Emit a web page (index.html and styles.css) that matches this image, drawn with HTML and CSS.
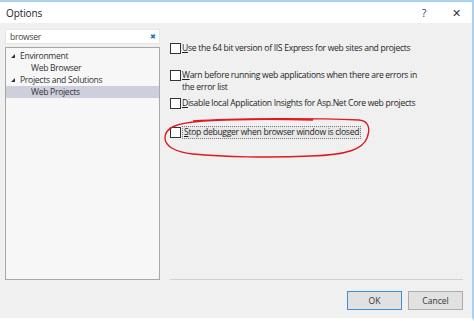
FILE: index.html
```html
<!DOCTYPE html>
<html lang="en">

<head>
    <meta charset="UTF-8">
    <title>Options</title>
    <link rel="stylesheet" href="styles.css">
</head>

<body>
    <div class="window">
        <div class="titlebar">
            <span class="title">Options</span>
            <span class="title-btn help">?</span>
            <span class="title-btn close">&#x2715;</span>
        </div>

        <div class="main">
            <div class="left">
                <div class="search">
                    <span>browser</span>
                    <span class="clear">&#x2716;</span>
                </div>
                <ul class="tree">
                    <li class="node"><span class="arrow"></span>Environment</li>
                    <li class="leaf">Web Browser</li>
                    <li class="node"><span class="arrow"></span>Projects and Solutions</li>
                    <li class="leaf selected">Web Projects</li>
                </ul>
            </div>

            <div class="right">
                <div class="options">
                    <label class="option first"><span class="box"></span><span><u>U</u>se the 64 bit version of IIS Express for web sites and projects</span></label>
                    <label class="option two-line"><span class="box"></span><span><u>W</u>arn before running web applications when there are errors in<br>the error list</span></label>
                    <label class="option third"><span class="box"></span><span><u>D</u>isable local Application Insights for Asp.Net Core web projects</span></label>
                    <label class="option focused"><span class="box"></span><span class="focus-text"><u>S</u>top debugger when browser window is closed</span></label>

                    <!-- red marker drawn over the screenshot -->
                    <svg class="marker" width="210" height="42" viewBox="0 0 210 42">
                        <path d="M30 4 C70 1 150 1 196 3 C207 4 207 13 204 21 C200 32 184 38 148 39 C108 41 60 40 30 37 C12 35 2 29 2 21 C2 11 12 6 40 4 C90 1 120 2 150 3"
                            fill="none" stroke="#e0191e" stroke-width="1.4" />
                    </svg>
                </div>
                <div class="separator"></div>
            </div>
        </div>

        <div class="footer">
            <button class="btn default">OK</button>
            <button class="btn">Cancel</button>
        </div>
    </div>
</body>

</html>
```

FILE: styles.css
```css
body {
    margin: 0;
    padding: 0;
    font-family: 'Open Sans', 'Noto Sans', sans-serif;
    font-size: 8.6px;
    letter-spacing: -0.3px;
    color: #1e1e1e;
    background: #ffffff;
}

.window {
    width: 472px;
    height: 316px;
    border-top: 2px solid #a9d2f2;
    border-right: 2px solid #a9d2f2;
    background: #f0f0f0;
    display: flex;
    flex-direction: column;
    border-bottom: 3px solid #ffffff;
}

/* Title bar */
.titlebar {
    height: 21px;
    background: #ffffff;
    display: flex;
    align-items: center;
    padding: 0 0 0 6px;
}

.title {
    flex: 1;
    font-size: 10px;
    letter-spacing: -0.1px;
}

.title-btn {
    width: 32px;
    text-align: center;
    color: #333;
}

.help {
    font-size: 10px;
}

.close {
    font-size: 11px;
}

/* Main area */
.main {
    flex: 1;
    display: flex;
    padding: 6px 9px 0 5px;
}

.left {
    flex: none;
    width: 155px;
    display: flex;
    flex-direction: column;
}

.search {
    height: 13px;
    background: #ffffff;
    border: 1px solid #e6e6e6;
    display: flex;
    align-items: center;
    justify-content: space-between;
    padding: 0 3px 0 4px;
    color: #444;
}

.clear {
    color: #2c6fc0;
    font-size: 7px;
}

.tree {
    flex: 1;
    margin: 3px 0 0 0;
    padding: 2px 0 0 0;
    list-style: none;
    background: #f7f7f7;
    border: 1px solid #a8a8a8;
}

.tree li {
    height: 12px;
    line-height: 12px;
    color: #333;
}

.node {
    padding-left: 5px;
}

.leaf {
    padding-left: 25px;
}

.selected {
    background: #cdd0dc;
}

.arrow {
    display: inline-block;
    width: 0;
    height: 0;
    border-left: 4px solid transparent;
    border-bottom: 4px solid #333;
    margin: 0 5px 1px 0;
}

.right {
    flex: 1;
    min-width: 0;
    display: flex;
    flex-direction: column;
    padding-left: 10px;
}

.options {
    flex: 1;
    position: relative;
    padding-top: 13px;
}

.option {
    display: flex;
    align-items: flex-start;
    line-height: 12px;
    color: #1e1e1e;
    white-space: nowrap;
}

.option.first {
    margin-bottom: 15px;
}

.option.two-line {
    margin-bottom: 4px;
}

.option.focused {
    margin-top: 17px;
}

.box {
    flex: none;
    width: 9px;
    height: 9px;
    border: 1px solid #333;
    background: #ffffff;
    margin: 1px 1px 0 0;
}

.focus-text {
    border: 1px dotted #777;
    background: #e8e8e8;
    padding: 0 1px;
    line-height: 11px;
}

.marker {
    position: absolute;
    left: -7px;
    top: 88px;
}

.separator {
    height: 1px;
    background: #d0d0d0;
}

/* Buttons */
.footer {
    height: 38px;
    display: flex;
    justify-content: flex-end;
    align-items: flex-start;
    padding: 11px 9px 0 0;
    box-sizing: border-box;
    gap: 6px;
}

.btn {
    width: 55px;
    height: 19px;
    font-family: 'Open Sans', 'Noto Sans', sans-serif;
    font-size: 8.5px;
    color: #333;
    background: #e1e1e1;
    border: 1px solid #adadad;
    padding: 0;
}

.btn.default {
    border: 1px solid #3f8fd8;
}
```
